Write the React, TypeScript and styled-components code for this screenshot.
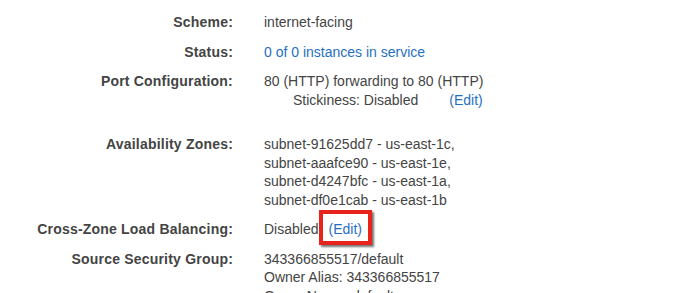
import React from "react";
import styled, { createGlobalStyle } from "styled-components";

const GlobalStyle = createGlobalStyle`
  html, body {
    margin: 0;
    padding: 0;
    background: #ffffff;
  }
  body {
    font-family: "Liberation Sans", Arial, sans-serif;
    font-size: 14px;
    color: #444444;
  }
`;

const Page = styled.main`
  width: 696px;
  height: 293px;
  overflow: hidden;
`;

const Details = styled.dl`
  display: grid;
  grid-template-columns: 233px 1fr;
  column-gap: 31px;
  row-gap: 11px;
  margin: 0;
  padding-top: 13px;
  line-height: 18.5px;
`;

const Label = styled.dt`
  font-weight: bold;
  text-align: right;
  letter-spacing: 0.2px;
  color: #444444;
`;

const Value = styled.dd<{ $spaced?: boolean }>`
  margin: 0 0 ${(p) => (p.$spaced ? "15px" : "0")} 0;
  color: #444444;
`;

const Line = styled.div<{ $indent?: number }>`
  padding-left: ${(p) => p.$indent || 0}px;
  white-space: nowrap;
`;

const Link = styled.a<{ $gap?: number }>`
  color: #1f70c1;
  text-decoration: none;
  margin-left: ${(p) => p.$gap || 0}px;
  cursor: pointer;
`;

const Callout = styled.span`
  position: relative;
  display: inline-block;
  margin-left: 10px;

  &::after {
    content: "";
    position: absolute;
    top: -10px;
    left: -9px;
    right: -10px;
    bottom: -6px;
    border: 4px solid #e8231b;
    box-shadow: 2px 2px 2px rgba(0, 0, 0, 0.55);
    pointer-events: none;
  }
`;

const zones = [
  "subnet-91625dd7 - us-east-1c,",
  "subnet-aaafce90 - us-east-1e,",
  "subnet-d4247bfc - us-east-1a,",
  "subnet-df0e1cab - us-east-1b",
];

export default function App() {
  return (
    <Page>
      <GlobalStyle />
      <Details>
        <Label>Scheme:</Label>
        <Value>internet-facing</Value>

        <Label>Status:</Label>
        <Value>
          <Link>0 of 0 instances in service</Link>
        </Value>

        <Label>Port Configuration:</Label>
        <Value $spaced>
          <Line>80 (HTTP) forwarding to 80 (HTTP)</Line>
          <Line $indent={29}>
            Stickiness: Disabled<Link $gap={31}>(Edit)</Link>
          </Line>
        </Value>

        <Label>Availability Zones:</Label>
        <Value>
          {zones.map((z) => (
            <Line key={z}>{z}</Line>
          ))}
        </Value>

        <Label>Cross-Zone Load Balancing:</Label>
        <Value>
          Disabled
          <Callout>
            <Link>(Edit)</Link>
          </Callout>
        </Value>

        <Label>Source Security Group:</Label>
        <Value>
          <Line>343366855517/default</Line>
          <Line>Owner Alias: 343366855517</Line>
          <Line>Group Name: default</Line>
        </Value>
      </Details>
    </Page>
  );
}
